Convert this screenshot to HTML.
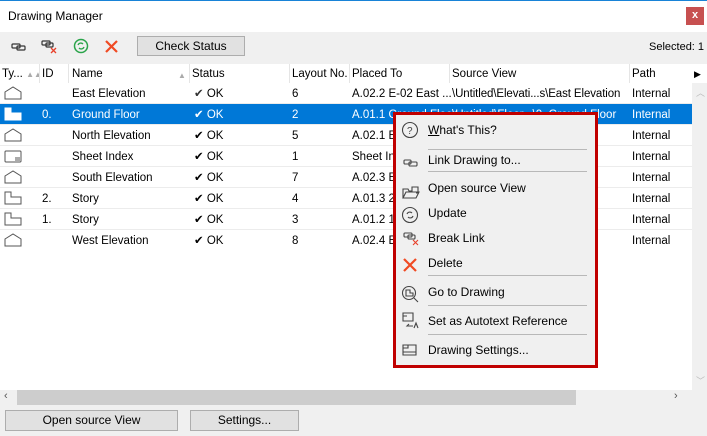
<!DOCTYPE html>
<html><head><style>
*{margin:0;padding:0;box-sizing:border-box}
body{width:707px;height:436px;position:relative;overflow:hidden;background:#f0f0f0;font-family:"Liberation Sans",sans-serif;font-size:11.5px;color:#000}
.a{position:absolute;white-space:nowrap}
.row{position:absolute;left:0;width:692px;height:21px;border-bottom:1px solid #ececec;background:#fff;overflow:hidden}
.row span{position:absolute;top:4px;line-height:14px}
.sel{background:#0078d7;color:#fff}
.hd span{position:absolute;top:4px}
.btn{position:absolute;background:#e1e1e1;border:1px solid #adadad;text-align:center;line-height:19px}
.mi{position:absolute;left:32px;font-size:12px}
.sep{position:absolute;left:32px;width:159px;height:1px;background:#b8b8b8}
.ck{color:#333;font-weight:normal}
</style></head><body>
<div class="a" style="left:0;top:0;width:707px;height:32px;background:#fff;border-top:1px solid #1883d7"></div>
<div class="a" style="left:8px;top:9px;font-size:12px">Drawing Manager</div>
<div class="a" style="left:686px;top:7px;width:18px;height:18px;background:#c75050;color:#fff;font-size:11px;text-align:center;line-height:17px;font-weight:bold">x</div>
<svg class="a" style="left:8px;top:37px" width="120" height="20">
<g fill="none" stroke="#333" stroke-width="1.2"><rect x="4" y="7" width="8" height="4" rx="1"/><rect x="9" y="9" width="8" height="4" rx="1"/>
<rect x="34" y="4" width="8" height="4" rx="1"/><rect x="38" y="6" width="7" height="4" rx="1"/></g>
<path d="M43 11l5 5M48 11l-5 5" stroke="#e8402a" stroke-width="1.3"/>
<circle cx="73" cy="9" r="6.5" fill="none" stroke="#2aa44a" stroke-width="1.5"/>
<path d="M70 8a3 3 0 0 1 5-1M76 10a3 3 0 0 1-5 1" stroke="#2aa44a" stroke-width="1.3" fill="none"/>
<path d="M98 4l11 11M109 4l-11 11" stroke="#f04a23" stroke-width="2.2"/>
</svg>
<div class="btn" style="left:137px;top:36px;width:108px;height:20px;font-size:12px">Check Status</div>
<div class="a" style="left:649px;top:41px;font-size:11px">Selected: 1</div>
<div class="a" style="left:0;top:64px;width:707px;height:326px;background:#fff"></div>
<div class="a hd" style="left:0;top:64px;width:692px;height:19px">
<span style="left:2px">Ty... <span style="position:static;color:#aaa;font-size:8px">▲▲</span></span><span style="left:42px">ID</span><span style="left:72px">Name</span><span style="left:178px;color:#aaa;font-size:8px;top:7px">▲</span><span style="left:192px">Status</span><span style="left:292px">Layout No.</span><span style="left:352px">Placed To</span><span style="left:452px">Source View</span><span style="left:632px">Path</span><span style="left:694px;font-size:9px;top:5px">▶</span>
</div>
<div class="a" style="left:39px;top:64px;width:1px;height:19px;background:#e5e5e5"></div>
<div class="a" style="left:68px;top:64px;width:1px;height:19px;background:#e5e5e5"></div>
<div class="a" style="left:189px;top:64px;width:1px;height:19px;background:#e5e5e5"></div>
<div class="a" style="left:289px;top:64px;width:1px;height:19px;background:#e5e5e5"></div>
<div class="a" style="left:349px;top:64px;width:1px;height:19px;background:#e5e5e5"></div>
<div class="a" style="left:449px;top:64px;width:1px;height:19px;background:#e5e5e5"></div>
<div class="a" style="left:629px;top:64px;width:1px;height:19px;background:#e5e5e5"></div>

<div class="row" style="top:83px"><span style="left:4px;top:3px"><svg width="18" height="14"><path d="M1 6l8-5 8 5v7H1z" fill="none" stroke="#555"/></svg></span><span style="left:72px">East Elevation</span><span style="left:194px"><i class="ck" style="font-style:normal">✔</i> OK</span><span style="left:292px">6</span><span style="left:352px">A.02.2 E-02 East ...</span><span style="left:452px;letter-spacing:-0.1px">\Untitled\Elevati...s\East Elevation</span><span style="left:632px;background:#fff">Internal</span></div>
<div class="row sel" style="top:104px"><span style="left:4px;top:3px"><svg width="18" height="14"><path d="M1 1h6v5h10v7H1z" fill="#fff" stroke="#fff"/></svg></span><span style="left:42px">0.</span><span style="left:72px">Ground Floor</span><span style="left:194px">✔ OK</span><span style="left:292px">2</span><span style="left:352px">A.01.1 Ground Floor</span><span style="left:452px">\Untitled\Floor...\0. Ground Floor</span><span style="left:632px">Internal</span></div>
<div class="row" style="top:125px"><span style="left:4px;top:3px"><svg width="18" height="14"><path d="M1 6l8-5 8 5v7H1z" fill="none" stroke="#555"/></svg></span><span style="left:72px">North Elevation</span><span style="left:194px">✔ OK</span><span style="left:292px">5</span><span style="left:352px">A.02.1 E</span><span style="left:632px">Internal</span></div>
<div class="row" style="top:146px"><span style="left:4px;top:3px"><svg width="18" height="14"><rect x="1" y="2" width="16" height="11" rx="1" fill="none" stroke="#555"/><path d="M11 9h5M11 11h5" stroke="#555"/></svg></span><span style="left:72px">Sheet Index</span><span style="left:194px">✔ OK</span><span style="left:292px">1</span><span style="left:352px">Sheet In</span><span style="left:632px">Internal</span></div>
<div class="row" style="top:167px"><span style="left:4px;top:3px"><svg width="18" height="14"><path d="M1 6l8-5 8 5v7H1z" fill="none" stroke="#555"/></svg></span><span style="left:72px">South Elevation</span><span style="left:194px">✔ OK</span><span style="left:292px">7</span><span style="left:352px">A.02.3 E</span><span style="left:632px">Internal</span></div>
<div class="row" style="top:188px"><span style="left:4px;top:3px"><svg width="18" height="14"><path d="M1 1h6v5h10v7H1z" fill="none" stroke="#555"/></svg></span><span style="left:42px">2.</span><span style="left:72px">Story</span><span style="left:194px">✔ OK</span><span style="left:292px">4</span><span style="left:352px">A.01.3 2</span><span style="left:632px">Internal</span></div>
<div class="row" style="top:209px"><span style="left:4px;top:3px"><svg width="18" height="14"><path d="M1 1h6v5h10v7H1z" fill="none" stroke="#555"/></svg></span><span style="left:42px">1.</span><span style="left:72px">Story</span><span style="left:194px">✔ OK</span><span style="left:292px">3</span><span style="left:352px">A.01.2 1</span><span style="left:632px">Internal</span></div>
<div class="row" style="top:230px;border-bottom:none"><span style="left:4px;top:3px"><svg width="18" height="14"><path d="M1 6l8-5 8 5v7H1z" fill="none" stroke="#555"/></svg></span><span style="left:72px">West Elevation</span><span style="left:194px">✔ OK</span><span style="left:292px">8</span><span style="left:352px">A.02.4 E</span><span style="left:632px">Internal</span></div>
<div class="a" style="left:692px;top:83px;width:15px;height:307px;background:#f0f0f0"></div>
<div class="a" style="left:696px;top:86px;color:#bbb;font-size:9px">︿</div>
<div class="a" style="left:696px;top:374px;color:#bbb;font-size:9px">﹀</div>
<div class="a" style="left:0;top:390px;width:707px;height:15px;background:#f0f0f0"></div>
<div class="a" style="left:17px;top:390px;width:559px;height:15px;background:#cdcdcd"></div>
<div class="a" style="left:4px;top:390px;font-size:11px;color:#555">‹</div>
<div class="a" style="left:674px;top:390px;font-size:11px;color:#555">›</div>
<div class="btn" style="left:5px;top:410px;width:173px;height:21px;font-size:12px">Open source View</div>
<div class="btn" style="left:190px;top:410px;width:109px;height:21px;font-size:12px">Settings...</div>
<div class="a" style="left:393px;top:112px;width:205px;height:256px;border:3px solid #c00000;background:#f0f0f0">
<svg class="a" style="left:4px;top:5px" width="26" height="240" fill="none" stroke="#444" stroke-width="1.1">
<circle cx="10" cy="10" r="7.5"/><text x="7" y="14" font-size="10" fill="#444" stroke="none" font-family="Liberation Sans">?</text>
<rect x="4" y="40" width="7" height="4" rx="1"/><rect x="9" y="42" width="8" height="4" rx="1"/>
<path d="M3 78v-9h5l1 2h3v-4h6v6h-2M3 78h13l3-6H6z"/>
<circle cx="10" cy="95" r="7.5"/><path d="M7 94a3 3 0 0 1 5-1M13 96a3 3 0 0 1-5 1"/>
<rect x="4" y="113" width="8" height="4" rx="1"/><rect x="8" y="115" width="7" height="4" rx="1"/>
<path d="M13 120l5 5M18 120l-5 5" stroke="#e8402a"/>
<path d="M4 139l12 12M16 139l-12 12" stroke="#f04a23" stroke-width="2.2"/>
<circle cx="9" cy="173" r="6.5"/><path d="M14 178l4 4M6 170h4v3h3v3H6z"/>
<path d="M3 193h10v8H3zM3 196h4M9 204l-2 2h6M14 208l2-5 2 5"/>
<path d="M3 225h13v10H3zM3 228h5v-3M3 232h13"/>
</svg>
<div class="mi" style="top:8px"><u>W</u>hat's This?</div>
<div class="sep" style="top:34px"></div>
<div class="mi" style="top:38px">Link Drawing to...</div>
<div class="sep" style="top:56px"></div>
<div class="mi" style="top:66px">Open source View</div>
<div class="mi" style="top:91px">Update</div>
<div class="mi" style="top:116px">Break Link</div>
<div class="mi" style="top:141px">Delete</div>
<div class="sep" style="top:160px"></div>
<div class="mi" style="top:170px">Go to Drawing</div>
<div class="sep" style="top:190px"></div>
<div class="mi" style="top:199px">Set as Autotext Reference</div>
<div class="sep" style="top:219px"></div>
<div class="mi" style="top:228px">Drawing Settings...</div>
</div>
</body></html>
